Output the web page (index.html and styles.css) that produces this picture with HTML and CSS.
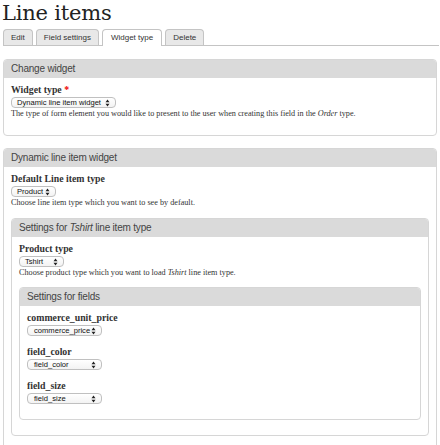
FILE: index.html
```html
<!DOCTYPE html>
<html>
<head>
<meta charset="utf-8">
<link rel="stylesheet" href="styles.css">
</head>
<body>
<h1 class="title">Line items</h1>
<div class="tabs">
  <span class="tab">Edit</span>
  <span class="tab">Field settings</span>
  <span class="tab active">Widget type</span>
  <span class="tab">Delete</span>
</div>

<div class="fs fs-first">
  <div class="fs-h">Change widget</div>
  <div class="fs-b">
    <div class="label">Widget type <span class="req">*</span></div>
    <div class="select w-widget"><span>Dynamic line item widget</span><svg width="5" height="8" viewBox="0 0 5 8"><path d="M0.5 3.2 L2.5 0.6 L4.5 3.2 Z M0.5 4.8 L2.5 7.4 L4.5 4.8 Z" fill="#222"/></svg></div>
    <div class="desc">The type of form element you would like to present to the user when creating this field in the <em>Order</em> type.</div>
  </div>
</div>

<div class="fs">
  <div class="fs-h">Dynamic line item widget</div>
  <div class="fs-b">
    <div class="label">Default Line item type</div>
    <div class="select w-product"><span>Product</span><svg width="5" height="8" viewBox="0 0 5 8"><path d="M0.5 3.2 L2.5 0.6 L4.5 3.2 Z M0.5 4.8 L2.5 7.4 L4.5 4.8 Z" fill="#222"/></svg></div>
    <div class="desc">Choose line item type which you want to see by default.</div>

    <div class="fs fs-nested fs-mid">
      <div class="fs-h">Settings for <em>Tshirt</em> line item type</div>
      <div class="fs-b">
        <div class="label">Product type</div>
        <div class="select w-tshirt"><span>Tshirt</span><svg width="5" height="8" viewBox="0 0 5 8"><path d="M0.5 3.2 L2.5 0.6 L4.5 3.2 Z M0.5 4.8 L2.5 7.4 L4.5 4.8 Z" fill="#222"/></svg></div>
        <div class="desc">Choose product type which you want to load <em>Tshirt</em> line item type.</div>

        <div class="fs fs-nested fs-inner">
          <div class="fs-h">Settings for fields</div>
          <div class="fs-b fields">
            <div class="item">
              <div class="label">commerce_unit_price</div>
              <div class="select w-field"><span>commerce_price</span><svg width="5" height="8" viewBox="0 0 5 8"><path d="M0.5 3.2 L2.5 0.6 L4.5 3.2 Z M0.5 4.8 L2.5 7.4 L4.5 4.8 Z" fill="#222"/></svg></div>
            </div>
            <div class="item">
              <div class="label">field_color</div>
              <div class="select w-field"><span>field_color</span><svg width="5" height="8" viewBox="0 0 5 8"><path d="M0.5 3.2 L2.5 0.6 L4.5 3.2 Z M0.5 4.8 L2.5 7.4 L4.5 4.8 Z" fill="#222"/></svg></div>
            </div>
            <div class="item">
              <div class="label">field_size</div>
              <div class="select w-field"><span>field_size</span><svg width="5" height="8" viewBox="0 0 5 8"><path d="M0.5 3.2 L2.5 0.6 L4.5 3.2 Z M0.5 4.8 L2.5 7.4 L4.5 4.8 Z" fill="#222"/></svg></div>
            </div>
          </div>
        </div>
      </div>
    </div>
  </div>
</div>
</body>
</html>
```
FILE: styles.css
```css
html, body {
  margin: 0;
  padding: 0;
  background: #fff;
}
body {
  padding: 0 3px 0 3px;
  font-family: "DejaVu Serif", Georgia, serif;
  color: #333;
  width: 434px;
}
.title {
  margin: 0 0 0 -1px;
  font-family: "DejaVu Serif", Georgia, serif;
  font-weight: normal;
  font-size: 21px;
  line-height: 26px;
  color: #222;
  height: 29px;
  letter-spacing: -0.2px;
}
.tabs {
  display: flex;
  gap: 3px;
  height: 16px;
  border-bottom: 1px solid #c4c4c4;
  margin-right: -2px;
}
.tab {
  height: 16px;
  box-sizing: border-box;
  padding: 0 7px;
  border: 1px solid #c4c4c4;
  border-bottom: none;
  border-radius: 4px 4px 0 0;
  background: #e8e8e8;
  font-family: "Liberation Sans", Arial, sans-serif;
  font-size: 8px;
  line-height: 16px;
  color: #333;
}
.tab.active {
  background: #fff;
  height: 17px;
  margin-bottom: -1px;
  padding: 0 8px;
}
.fs {
  border: 1px solid #d6d6d6;
  border-radius: 4px;
  overflow: hidden;
}
.fs-first {
  margin-top: 13px;
  margin-bottom: 12px;
}
.fs-mid {
  margin-top: 9px;
}
.fs-inner {
  margin-top: 8px;
}
.fs-h {
  background: #dadada;
  height: 18px;
  line-height: 18px;
  padding-left: 7px;
  font-family: "Liberation Sans", Arial, sans-serif;
  font-size: 10px;
  letter-spacing: -0.2px;
  color: #444;
}
.fs-b {
  padding: 5px 7px 15px 7px;
}
.label {
  font-family: "Liberation Serif", "Times New Roman", serif;
  font-weight: bold;
  font-size: 9.8px;
  line-height: 13px;
  color: #333;
}
.req {
  color: #e00;
}
.select {
  margin-top: 1px;
  box-sizing: border-box;
  height: 11px;
  display: flex;
  align-items: center;
  justify-content: space-between;
  padding: 0 5px 0 5px;
  border: 1px solid #c0c0c0;
  border-radius: 4px;
  background: linear-gradient(#ffffff, #f3f3f3);
  font-family: "Liberation Sans", Arial, sans-serif;
  font-size: 7.6px;
  color: #111;
}
.select svg {
  flex: none;
}
.w-widget { width: 105px; }
.w-product { width: 45px; }
.w-tshirt { width: 45px; }
.w-field { width: 75px; padding-left: 6px; }
.desc {
  font-family: "Liberation Serif", "Times New Roman", serif;
  font-size: 8.2px;
  line-height: 12px;
  color: #333;
}
.fields {
  display: flex;
  flex-direction: column;
  gap: 9px;
}
```
